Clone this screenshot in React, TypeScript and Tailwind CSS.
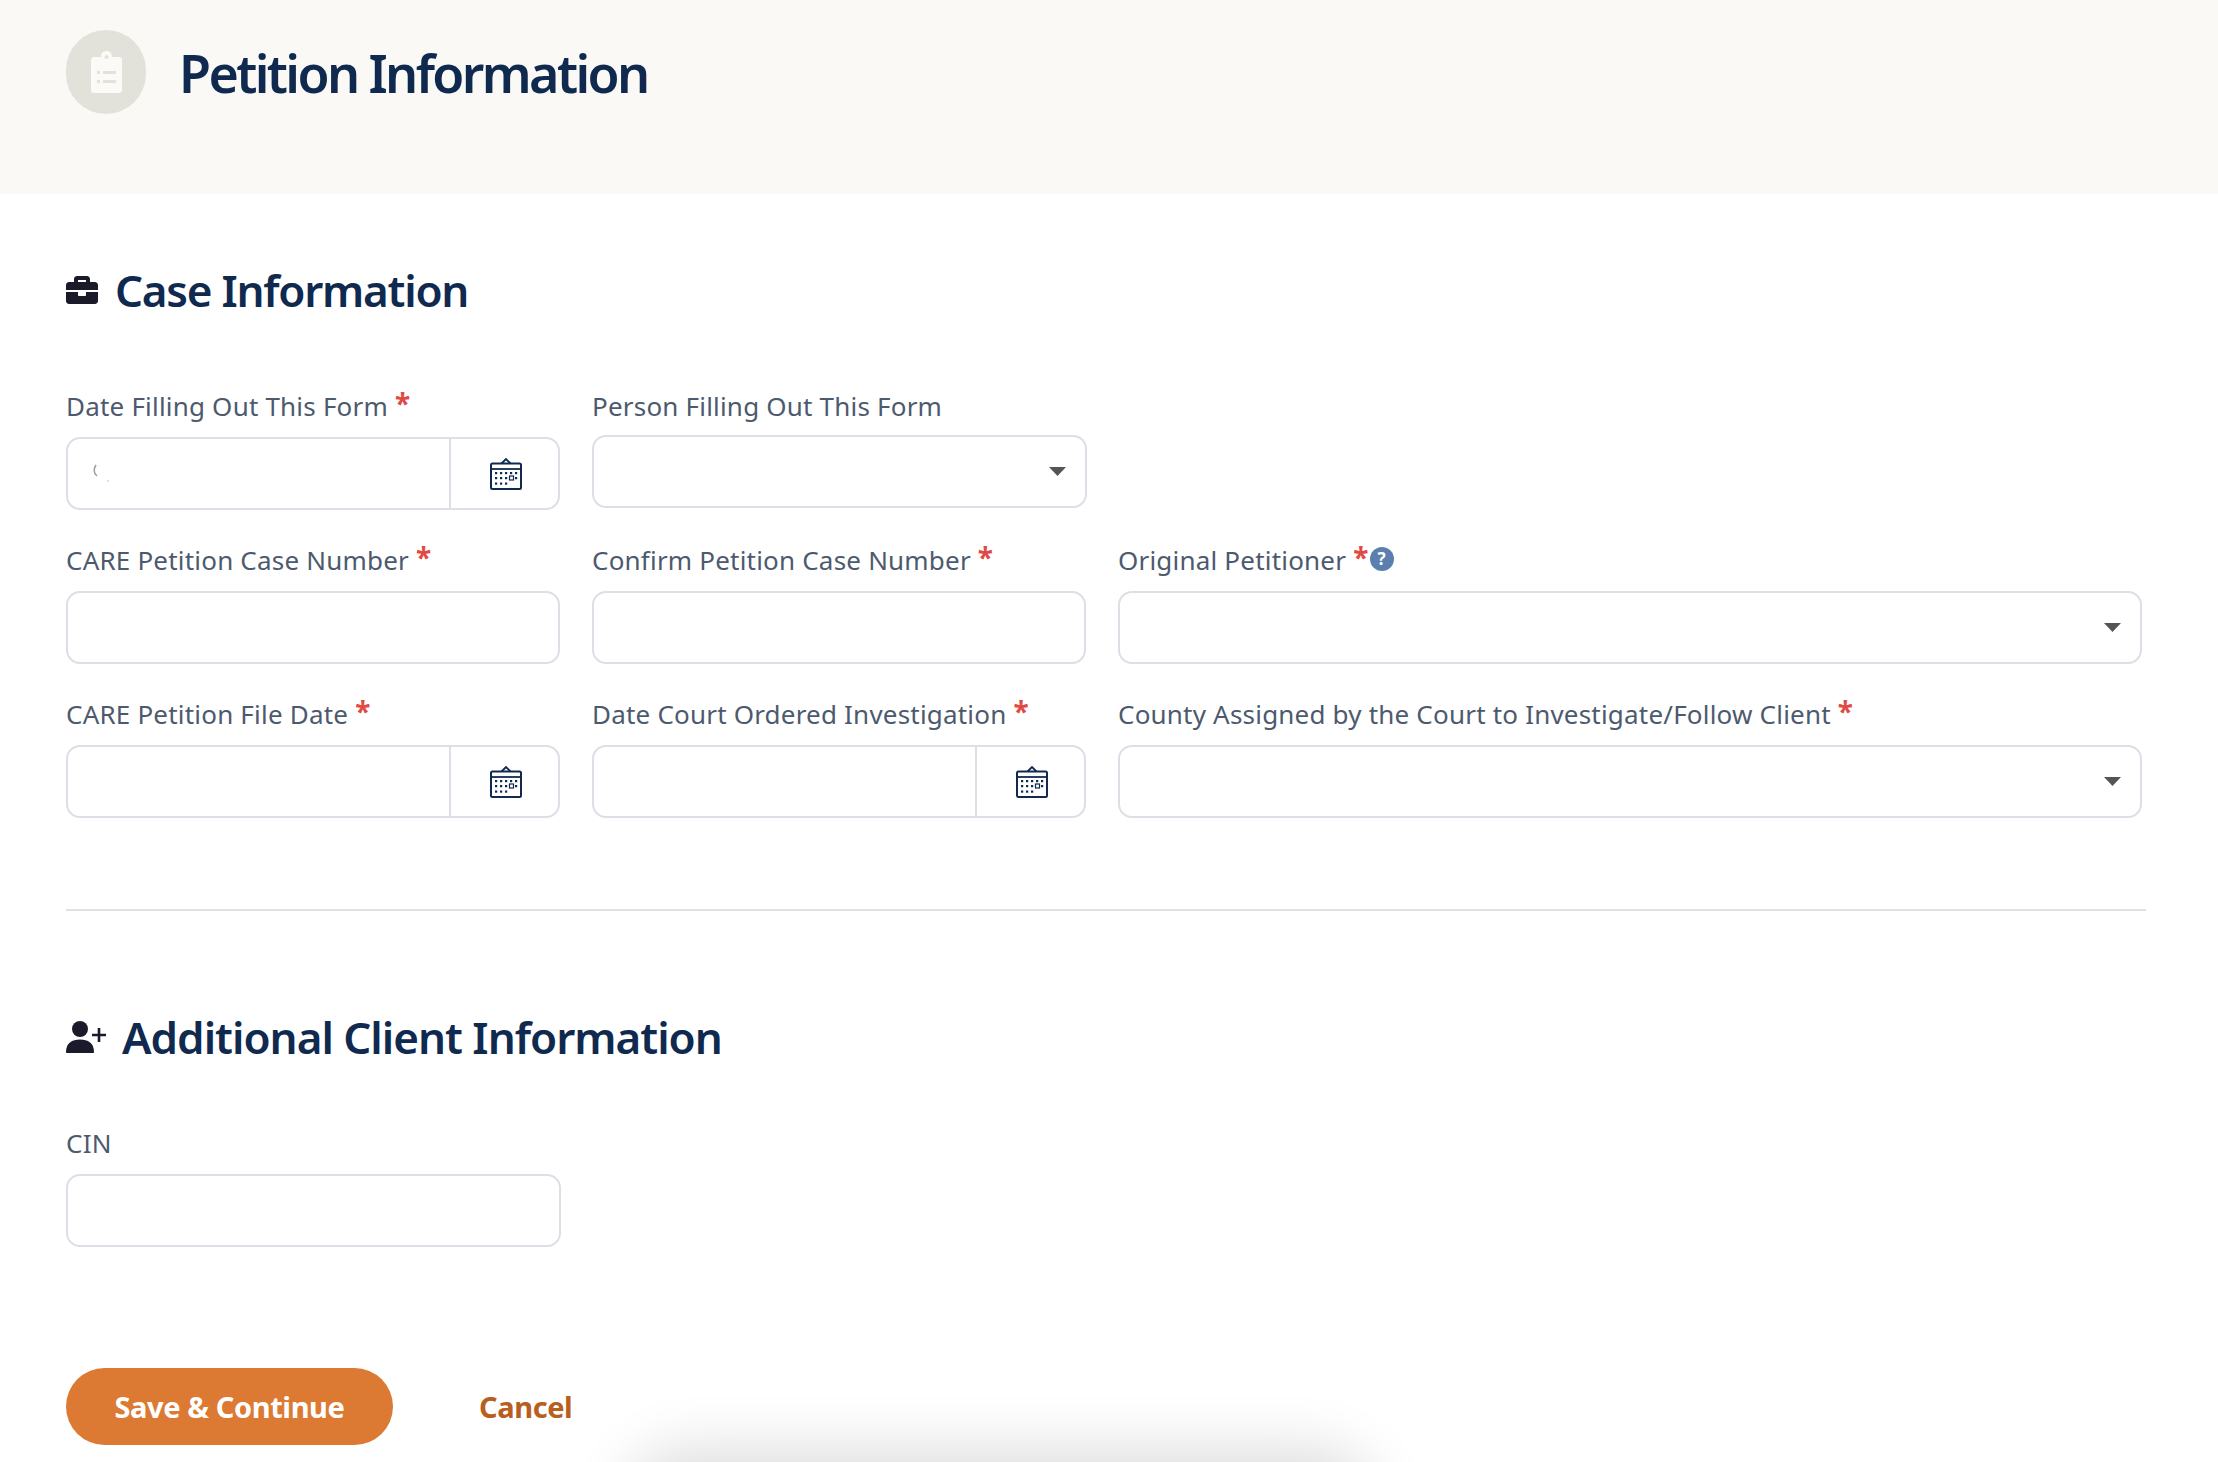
import { FaBriefcase } from "react-icons/fa";

const boxClass = "h-[73px] rounded-[14px] border-2 border-[#dcdfe6] bg-white";

function Req() {
  return <span className="ml-[7px] text-[28px] leading-none font-bold text-[#e04a45] relative -top-[3px]">*</span>;
}

function CalendarIcon() {
  return (
    <svg width="32" height="32" viewBox="0 0 32 32" fill="none" className="ml-[2px]">
      <path d="M11 6 L16 1 L21 6" stroke="#0f2a4e" strokeWidth="1.8" />
      <rect x="1" y="5.5" width="30" height="25.5" rx="1.5" stroke="#0f2a4e" strokeWidth="2" fill="#fff" />
      <path d="M1 11 H31" stroke="#0f2a4e" strokeWidth="1.8" />
      {[6, 11, 16, 21, 26].map((x) => (
        <rect key={x} x={x - 1} y="14" width="2.2" height="2.2" fill="#0f2a4e" />
      ))}
      {[6, 11, 16, 26].map((x) => (
        <rect key={x} x={x - 1} y="19" width="2.2" height="2.2" fill="#0f2a4e" />
      ))}
      <rect x="19.5" y="18" width="4" height="4" stroke="#0f2a4e" strokeWidth="1.2" />
      {[6, 11, 16].map((x) => (
        <rect key={x} x={x - 1} y="24.5" width="2.2" height="2.2" fill="#0f2a4e" />
      ))}
    </svg>
  );
}

function Caret() {
  return (
    <svg width="17" height="9" viewBox="0 0 17 9">
      <path d="M0 0 H17 L8.5 9 Z" fill="#555" />
    </svg>
  );
}

function Label({ text, required, help }: { text: string; required?: boolean; help?: boolean }) {
  return (
    <div className="h-[40px] mb-[11px] flex items-center text-[26px] tracking-[0.2px] text-[#4d5a6e] whitespace-nowrap">
      {text}
      {required && <Req />}
      {help && (
        <span className="ml-[1px] -mt-[2px] w-[24px] h-[24px] rounded-full bg-[#5b80b0] text-white text-[17px] font-bold flex items-center justify-center">?</span>
      )}
    </div>
  );
}

function TextField() {
  return <div className={boxClass} />;
}

function DateField({ spinner }: { spinner?: boolean }) {
  return (
    <div className={`${boxClass} flex`}>
      <div className="flex-1 flex items-center pl-[24px]">
        {spinner && (
          <svg width="18" height="20" viewBox="0 0 18 20" fill="none">
            <path d="M4 1 C1.5 5 1.5 9 5 12" stroke="#9aa0a8" strokeWidth="1.5" />
            <circle cx="16" cy="17" r="0.8" fill="#bbb" />
          </svg>
        )}
      </div>
      <div className="w-[109px] border-l-2 border-[#dcdfe6] flex items-center justify-center">
        <CalendarIcon />
      </div>
    </div>
  );
}

function SelectField({ className = "" }: { className?: string }) {
  return (
    <div className={`${boxClass} flex items-center justify-end pr-[19px] ${className}`}>
      <Caret />
    </div>
  );
}

export default function App() {
  return (
    <div className="relative h-[1462px] overflow-hidden bg-white font-['Noto_Sans',sans-serif]">
      <header className="h-[194px] bg-[#faf9f6] pl-[66px] pt-[30px] flex items-start gap-[33px]">
        <div className="w-[80px] h-[84px] rounded-full bg-[#e3e2da] flex items-center justify-center">
          <svg width="31" height="42" viewBox="0 0 31 42" className="blur-[0.6px]">
            <path d="M3 6 H10 C10 2 12.5 0 15.5 0 C18.5 0 21 2 21 6 H28 C30 6 31 7 31 9 V39 C31 41 30 42 28 42 H3 C1 42 0 41 0 39 V9 C0 7 1 6 3 6 Z" fill="#fbfaf7" />
            <circle cx="15.5" cy="6" r="2" fill="#e3e2da" />
            <rect x="6" y="20" width="3" height="3" fill="#e3e2da" />
            <rect x="12" y="20" width="13" height="3" fill="#e3e2da" />
            <rect x="6" y="29" width="3" height="3" fill="#e3e2da" />
            <rect x="12" y="29" width="13" height="3" fill="#e3e2da" />
          </svg>
        </div>
        <h1 className="mt-[6px] text-[52px] leading-[74px] font-semibold tracking-[-2.6px] text-[#0f2a4e]">Petition Information</h1>
      </header>

      <main className="pl-[66px] pr-[72px]">
        <section className="pt-[66px]">
          <h2 className="h-[60px] mb-[66px] flex items-center gap-[17px] text-[44px] font-semibold tracking-[-1.25px] text-[#0f2a4e]">
            <FaBriefcase className="w-[32px] h-[32px] text-[#1b1a2b]" />
            Case Information
          </h2>
          <div className="grid grid-cols-[494px_494px_1fr] gap-x-[32px] gap-y-[30px] pr-[4px]">
            <div>
              <Label text="Date Filling Out This Form" required />
              <DateField spinner />
            </div>
            <div>
              <Label text="Person Filling Out This Form" />
              <SelectField className="-mt-[2px] mb-[2px] w-[495px]" />
            </div>
            <div />
            <div>
              <Label text="CARE Petition Case Number" required />
              <TextField />
            </div>
            <div>
              <Label text="Confirm Petition Case Number" required />
              <TextField />
            </div>
            <div>
              <Label text="Original Petitioner" required help />
              <SelectField />
            </div>
            <div>
              <Label text="CARE Petition File Date" required />
              <DateField />
            </div>
            <div>
              <Label text="Date Court Ordered Investigation" required />
              <DateField />
            </div>
            <div>
              <Label text="County Assigned by the Court to Investigate/Follow Client" required />
              <SelectField />
            </div>
          </div>
        </section>

        <hr className="mt-[91px] border-t-2 border-[#dfe1e5]" />

        <section className="pt-[96px]">
          <h2 className="h-[60px] mb-[56px] flex items-center gap-[10px] text-[44px] font-semibold tracking-[-1px] text-[#0f2a4e]">
            <svg width="46" height="32" viewBox="0 0 46 32" fill="#1b1a2b">
              <circle cx="14" cy="8" r="8" />
              <path d="M0 31 C0 22 6 18.5 14 18.5 C22 18.5 28 22 28 31 C28 31.6 27.6 32 27 32 H1 C0.4 32 0 31.6 0 31 Z" />
              <path d="M33 13 V27 M26 20 H40" transform="translate(0 -6)" stroke="#1b1a2b" strokeWidth="2.6" />
            </svg>
            Additional Client Information
          </h2>
          <div className="w-[495px]">
            <Label text="CIN" />
            <TextField />
          </div>
        </section>

        <div className="mt-[121px] flex items-center gap-[86px]">
          <button className="w-[327px] h-[77px] rounded-full bg-[#dc7a33] text-white text-[29px] font-bold tracking-[-0.4px]">Save &amp; Continue</button>
          <button className="text-[29px] font-bold tracking-[-0.4px] text-[#b85f1f]">Cancel</button>
        </div>
      </main>

      <div className="absolute left-[655px] top-[1480px] w-[690px] h-[60px] rounded-[40px] bg-[#ddd] shadow-[0_0_60px_30px_rgba(0,0,0,0.14)]" />
    </div>
  );
}
